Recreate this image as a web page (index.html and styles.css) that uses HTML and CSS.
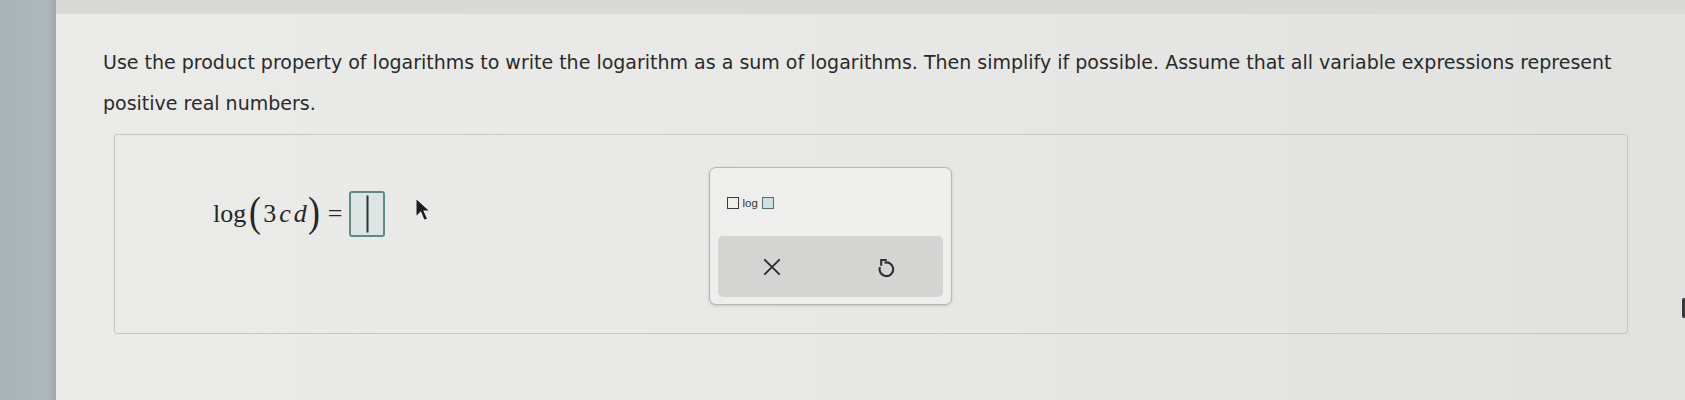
FILE: index.html
```html
<!DOCTYPE html>
<html lang="en">
<head>
    <title>Product property of logarithms</title>
    <link rel="stylesheet" href="styles.css">
</head>
<body>
    <div class="screen">
        <div class="side-strip"></div>
        <div class="page">
            <div class="top-band"></div>
            <div class="question">
                <p class="prompt">Use the product property of logarithms to write the logarithm as a sum of logarithms. Then simplify if possible. Assume that all variable expressions represent positive real numbers.</p>

                <div class="answer-area">
                    <div class="equation">
                        <span class="fn">log</span><span class="paren">(</span><span class="num">3</span><span class="var">c</span><span class="var">d</span><span class="paren">)</span>
                        <span class="eq">=</span>
                        <span class="answer-box"><span class="caret"></span></span>
                        <svg class="pointer" width="20" height="26" viewBox="0 0 16 22">
                            <path d="M2 1 L2 17 L6 13 L9 20 L12 18.5 L9 12 L14 12 Z" fill="#1d1d1d" stroke="#f2f2f2" stroke-width="1"/>
                        </svg>
                    </div>

                    <div class="palette">
                        <div class="palette-keys">
                            <span class="slot"></span><span class="log-label">log</span><span class="slot slot-active"></span>
                        </div>
                        <div class="palette-actions">
                            <button class="action" title="Clear">
                                <svg width="22" height="22" viewBox="0 0 20 20">
                                    <path d="M3 3 L17 17 M17 3 L3 17" stroke="#2c2c2c" stroke-width="1.7" fill="none"/>
                                </svg>
                            </button>
                            <button class="action" title="Undo">
                                <svg width="22" height="24" viewBox="0 0 20 22">
                                    <path d="M8.6 7 A6.3 6.3 0 1 1 4.4 11" stroke="#2c2c2c" stroke-width="1.9" fill="none"/>
                                    <path d="M5.6 9.8 L5.6 4.6 L10.6 4.6" stroke="#2c2c2c" stroke-width="1.9" fill="none"/>
                                </svg>
                            </button>
                        </div>
                    </div>
                </div>
            </div>
        </div>
        <div class="edge-mark"></div>
    </div>
</body>
</html>
```

FILE: styles.css
```css
body {
    margin: 0;
    padding: 0;
    font-family: "DejaVu Sans", Verdana, sans-serif;
    background-color: #e6e6e4;
}

.screen {
    display: flex;
    width: 1685px;
    height: 400px;
    overflow: hidden;
    position: relative;
    background: linear-gradient(90deg, #ebebe9 0%, #e8e8e6 50%, #e1e1df 100%);
}

.side-strip {
    width: 56px;
    flex-shrink: 0;
    background: linear-gradient(90deg, #a7b3b8 0%, #adb8bd 85%, #9ea8ac 100%);
}

.page {
    flex: 1;
    display: flex;
    flex-direction: column;
}

.top-band {
    height: 14px;
    background-color: #d9d9d8;
}

.question {
    padding: 28px 0 0 47px;
}

.prompt {
    margin: 0;
    width: 1540px;
    font-size: 19px;
    line-height: 41px;
    color: #2a2a2a;
}

.answer-area {
    margin: 10px 0 0 11px;
    width: 1514px;
    height: 200px;
    border: 1px solid #c6c6c4;
    border-radius: 3px;
    display: flex;
    align-items: flex-start;
    box-sizing: border-box;
}

.equation {
    display: flex;
    align-items: center;
    margin: 56px 0 0 98px;
    font-family: "Liberation Serif", "Times New Roman", serif;
    font-size: 26px;
    color: #262626;
}

.fn {
    margin-right: 2px;
}

.paren {
    font-size: 42px;
    line-height: 1;
    transform: scaleX(0.85);
    margin-top: -4px;
}

.num {
    margin-left: 1px;
}

.var {
    font-style: italic;
    margin-left: 3px;
}

.eq {
    margin: 0 7px 0 7px;
}

.answer-box {
    width: 32px;
    height: 42px;
    border: 2px solid #5f8a88;
    border-radius: 3px;
    background-color: #dbe5e3;
    display: flex;
    justify-content: center;
    align-items: center;
}

.caret {
    width: 1px;
    height: 32px;
    background-color: #333;
    border-top: 2px solid #333;
    border-bottom: 2px solid #333;
    box-shadow: 0 0 0 0.5px #333;
}

.pointer {
    margin: 0 0 8px 28px;
}

.palette {
    margin: 32px 0 0 276px;
    width: 243px;
    height: 138px;
    background-color: #eeeeec;
    border: 1px solid #b5b5b3;
    border-radius: 7px;
    box-shadow: 0 1px 3px rgba(0, 0, 0, 0.15);
    box-sizing: border-box;
    display: flex;
    flex-direction: column;
    padding: 28px 8px 7px 8px;
}

.palette-keys {
    display: flex;
    align-items: center;
    padding-left: 9px;
    height: 14px;
}

.slot {
    width: 12px;
    height: 12px;
    border: 1.8px solid #3b3b3b;
    box-sizing: border-box;
}

.slot-active {
    border-color: #4f6f70;
    background-color: #cfdfdf;
}

.log-label {
    font-family: "Liberation Sans", Arial, sans-serif;
    font-size: 11.5px;
    color: #333;
    margin: 0 4px 0 3px;
}

.palette-actions {
    margin-top: auto;
    height: 61px;
    background-color: #d4d5d3;
    border-radius: 5px;
    display: flex;
    justify-content: space-between;
    align-items: center;
    padding: 0 37px 0 34px;
}

.action {
    background: none;
    border: none;
    padding: 0;
    width: 40px;
    height: 40px;
    display: flex;
    justify-content: center;
    align-items: center;
    cursor: pointer;
}

.edge-mark {
    position: absolute;
    right: 0;
    top: 298px;
    width: 3px;
    height: 20px;
    background-color: #3a3a3a;
    border-radius: 2px 0 0 2px;
}
```
